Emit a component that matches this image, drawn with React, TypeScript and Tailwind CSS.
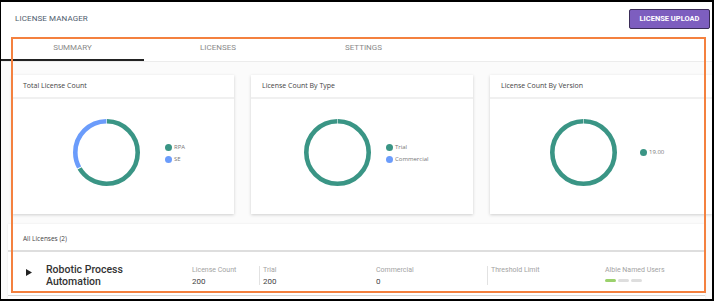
import { Fragment } from 'react'

type Segment = { color: string; value: number }

type ChartCard = {
  id: string
  title: string
  segments: Segment[]
  legend: { label: string; color: string }[]
  chartClass: string
  legendClass: string
}

const TEAL = '#3a9585'
const BLUE = '#6b9cfb'

const charts: ChartCard[] = [
  {
    id: 'total',
    title: 'Total License Count',
    segments: [
      { color: TEAL, value: 2 },
      { color: BLUE, value: 1 },
    ],
    legend: [
      { label: 'RPA', color: TEAL },
      { label: 'SE', color: BLUE },
    ],
    chartClass: 'ml-[61px]',
    legendClass: 'ml-[25px] mt-[25px]',
  },
  {
    id: 'type',
    title: 'License Count By Type',
    segments: [{ color: TEAL, value: 1 }],
    legend: [
      { label: 'Trial', color: TEAL },
      { label: 'Commercial', color: BLUE },
    ],
    chartClass: 'ml-[53px]',
    legendClass: 'ml-[15px] mt-[25px]',
  },
  {
    id: 'version',
    title: 'License Count By Version',
    segments: [{ color: TEAL, value: 1 }],
    legend: [{ label: '19.00', color: TEAL }],
    chartClass: 'ml-[60px]',
    legendClass: 'ml-[23px] mt-[30px]',
  },
]

const tabs = [
  { label: 'SUMMARY', width: 'w-[143px]', active: true },
  { label: 'LICENSES', width: 'w-[148px]', active: false },
  { label: 'SETTINGS', width: 'w-[143px]', active: false },
]

const columns = [
  { label: 'License Count', value: '200', width: 'w-[67px]', divider: true },
  { label: 'Trial', value: '200', width: 'w-[113px]', divider: false },
  { label: 'Commercial', value: '0', width: 'w-[111px]', divider: true },
  { label: 'Threshold Limit', value: '', width: 'w-[114px]', divider: false },
]

function Donut({ segments }: { segments: Segment[] }) {
  const r = 31.2
  const c = 2 * Math.PI * r
  const total = segments.reduce((s, x) => s + x.value, 0)
  const gap = 0.9
  let offset = 0
  return (
    <svg width="67" height="67" viewBox="0 0 67 67">
      <g transform="rotate(-90 33.5 33.5)">
        {segments.map((seg, i) => {
          const len = (seg.value / total) * c
          const el = (
            <circle
              key={i}
              cx="33.5"
              cy="33.5"
              r={r}
              fill="none"
              stroke={seg.color}
              strokeWidth="4.6"
              strokeDasharray={`${len - gap} ${c - len + gap}`}
              strokeDashoffset={-(offset + gap / 2)}
            />
          )
          offset += len
          return el
        })}
      </g>
    </svg>
  )
}

export default function App() {
  return (
    <div className="relative h-[301px] w-[715px] overflow-hidden bg-white font-['Roboto',sans-serif]">
      <div className="flex h-[301px] w-[714px] flex-col overflow-hidden border-b-2 border-l border-r-2 border-t-2 border-black bg-[#fbfbfb]">
        <header className="flex h-[34px] shrink-0 items-start justify-between bg-white">
          <h1 className="pl-[14px] pt-[11px] text-[8px] tracking-[0.1px] text-[#4f5d6e]">LICENSE MANAGER</h1>
          <button
            type="button"
            className="mr-[2px] mt-[7px] h-[20px] w-[81px] rounded-[2px] border border-[#3b2d58] bg-[#7d5ebf] text-[7.5px] font-bold text-white"
          >
            LICENSE UPLOAD
          </button>
        </header>

        <nav className="flex h-[26px] shrink-0 border-b border-[#ececec] bg-white">
          {tabs.map((tab) => (
            <div
              key={tab.label}
              className={`flex ${tab.width} items-center justify-center border-b-2 pt-[1px] text-[8px] text-[#8a8a8a] ${
                tab.active ? 'border-[#222]' : 'border-transparent'
              }`}
            >
              {tab.label}
            </div>
          ))}
        </nav>

        <div className="flex gap-[17px] pl-[11px] pt-[13px]">
          {charts.map((card) => (
            <section
              key={card.id}
              className="flex h-[139px] w-[222px] shrink-0 flex-col bg-white shadow-[0_1px_3px_rgba(0,0,0,0.18)]"
            >
              <div className="flex h-[24px] items-center border-b-2 border-[#f0f0f0] pl-[11px] pt-[1px] font-['Open_Sans',sans-serif] text-[7px] text-[#444]">
                {card.title}
              </div>
              <div className="flex flex-1 items-start pt-[20px]">
                <div className={card.chartClass}>
                  <Donut segments={card.segments} />
                </div>
                <ul
                  className={`${card.legendClass} flex flex-col gap-[5px] font-['Open_Sans',sans-serif] text-[6px] text-[#777]`}
                >
                  {card.legend.map((l) => (
                    <li key={l.label} className="flex items-center gap-[2px] leading-[7px]">
                      <span className="h-[7px] w-[7px] rounded-full" style={{ backgroundColor: l.color }} />
                      {l.label}
                    </li>
                  ))}
                </ul>
              </div>
            </section>
          ))}
        </div>

        <section className="mx-[7px] mt-[10px] flex-1 bg-white shadow-[0_0_2px_rgba(0,0,0,0.08)]">
          <div className="flex h-[28px] items-center border-b-2 border-[#dedede] pl-[15px] pt-[4px] font-['Open_Sans',sans-serif] text-[6.5px] text-[#444]">
            All Licenses (2)
          </div>
          <div className="flex h-[44px] items-start border-b border-[#d8d8d8] pt-[12px]">
            <svg className="ml-[18px] mt-[5px]" width="6" height="7" viewBox="0 0 6 7">
              <path d="M0 0 L6 3.5 L0 7 Z" fill="#222" />
            </svg>
            <div className="ml-[14px] w-[146px] text-[10.5px] font-medium leading-[12px] text-[#333]">
              Robotic Process
              <br />
              Automation
            </div>
            {columns.map((col) => (
              <Fragment key={col.label}>
                <div className={`${col.width} shrink-0 leading-[12px]`}>
                  <div className="text-[7px] text-[#a3a3a3]">{col.label}</div>
                  <div className="text-[8px] text-[#444]">{col.value}</div>
                </div>
                {col.divider && <div className="mr-[3px] mt-[2px] h-[19px] w-px bg-[#e2e2e2]" />}
              </Fragment>
            ))}
            <div className="leading-[12px]">
              <div className="text-[7px] text-[#a3a3a3]">Albie Named Users</div>
              <div className="mt-[3px] flex gap-[2px]">
                <span className="h-[3px] w-[11px] rounded-full bg-[#9bd16c]" />
                <span className="h-[3px] w-[11px] rounded-full bg-[#dedede]" />
                <span className="h-[3px] w-[11px] rounded-full bg-[#dedede]" />
              </div>
            </div>
          </div>
        </section>
      </div>

      <div className="pointer-events-none absolute left-[11px] top-[37px] h-[256px] w-[695px] border-2 border-[#f4813f]" />
    </div>
  )
}
